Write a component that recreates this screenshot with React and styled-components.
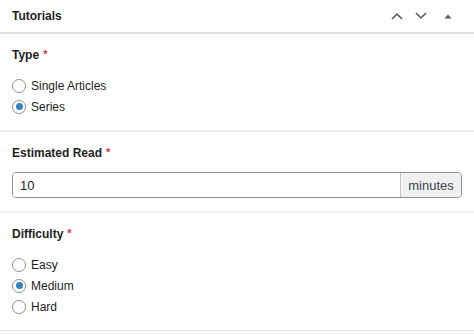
import React, { useState } from 'react'
import styled, { createGlobalStyle } from 'styled-components'

const GlobalStyle = createGlobalStyle`
  html, body {
    margin: 0;
    padding: 0;
    background: #fff;
  }
  body {
    font-family: "Liberation Sans", Arial, sans-serif;
    color: #1e1e1e;
  }
`;

const Panel = styled.div`
  width: 474px;
  background: #fff;
  border-bottom: 1px solid #e6e6e6;
`;

const Header = styled.div`
  height: 32px;
  display: flex;
  align-items: center;
  padding: 0 12px;
  border-bottom: 2px solid #e0e0e0;
`;

const Title = styled.h2`
  flex: 1;
  margin: 0;
  font-size: 12px;
  font-weight: 700;
  color: #1e1e1e;
`;

const Actions = styled.div`
  display: flex;
  align-items: center;
  margin-right: -1px;
`;

const IconButton = styled.button`
  border: 0;
  background: none;
  padding: 0;
  width: ${p => p.$w || 24}px;
  height: 24px;
  display: flex;
  align-items: center;
  justify-content: center;
  color: #50575e;
  cursor: pointer;
`;

const Section = styled.div`
  padding: 13px 12px;
  border-bottom: ${p => (p.$last ? 'none' : '2px solid #f0f0f1')};
`;

const Label = styled.div`
  font-size: 12px;
  font-weight: 700;
  line-height: 16px;
  height: 16px;
  margin-bottom: ${p => p.$gap || 12}px;
  color: #1e1e1e;
`;

const Required = styled.span`
  color: #d63638;
  margin-left: 4px;
  font-size: 11px;
  line-height: 0;
  vertical-align: 1px;
`;

const RadioRow = styled.label`
  display: flex;
  align-items: center;
  height: 21px;
  gap: 5px;
  font-size: 12px;
  color: #1e1e1e;
  cursor: pointer;
`;

const Radio = styled.input.attrs({ type: 'radio' })`
  appearance: none;
  margin: 0;
  width: 14px;
  height: 14px;
  border-radius: 50%;
  border: 1px solid #8c8f94;
  background: #fff;
  display: grid;
  place-items: center;
  box-sizing: border-box;
  &::before {
    content: '';
    width: 7px;
    height: 7px;
    border-radius: 50%;
    background: #3582c4;
    transform: scale(${p => (p.checked ? 1 : 0)});
  }
`;

const InputGroup = styled.div`
  display: flex;
  height: 26px;
  border: 1px solid #8c8f94;
  border-radius: 4px;
  overflow: hidden;
  box-sizing: border-box;
`;

const TextInput = styled.input`
  flex: 1;
  border: 0;
  outline: none;
  padding: 0 7px;
  font-family: "Liberation Sans", Arial, sans-serif;
  font-size: 13px;
  color: #1e1e1e;
  min-width: 0;
`;

const Addon = styled.span`
  width: 60px;
  display: flex;
  align-items: center;
  justify-content: center;
  background: #f0f0f1;
  border-left: 1px solid #c3c4c7;
  font-size: 13px;
  color: #3c434a;
`;

const Chevron = ({ up }) => (
  <svg width="12" height="8" viewBox="0 0 12 8" fill="none">
    <path
      d={up ? 'M1 7 L6 2 L11 7' : 'M1 1 L6 6 L11 1'}
      stroke="currentColor"
      strokeWidth="1.5"
    />
  </svg>
);

const Caret = () => (
  <svg width="8" height="5" viewBox="0 0 8 5">
    <path d="M0.5 4.5 L4 0.5 L7.5 4.5 Z" fill="currentColor" />
  </svg>
);

const RadioGroup = ({ name, options, value, onChange }) => (
  <div>
    {options.map(opt => (
      <RadioRow key={opt}>
        <Radio
          name={name}
          checked={value === opt}
          onChange={() => onChange(opt)}
        />
        {opt}
      </RadioRow>
    ))}
  </div>
);

export default function App() {
  const [type, setType] = useState('Series');
  const [read, setRead] = useState('10');
  const [difficulty, setDifficulty] = useState('Medium');

  return (
    <>
      <GlobalStyle />
      <Panel>
        <Header>
          <Title>Tutorials</Title>
          <Actions>
            <IconButton aria-label="Move up"><Chevron up /></IconButton>
            <IconButton aria-label="Move down"><Chevron /></IconButton>
            <IconButton $w={30} aria-label="Toggle panel"><Caret /></IconButton>
          </Actions>
        </Header>

        <Section>
          <Label>Type<Required>*</Required></Label>
          <RadioGroup
            name="type"
            options={['Single Articles', 'Series']}
            value={type}
            onChange={setType}
          />
        </Section>

        <Section>
          <Label $gap={11}>Estimated Read<Required>*</Required></Label>
          <InputGroup>
            <TextInput value={read} onChange={e => setRead(e.target.value)} />
            <Addon>minutes</Addon>
          </InputGroup>
        </Section>

        <Section $last>
          <Label>Difficulty<Required>*</Required></Label>
          <RadioGroup
            name="difficulty"
            options={['Easy', 'Medium', 'Hard']}
            value={difficulty}
            onChange={setDifficulty}
          />
        </Section>
      </Panel>
    </>
  );
}
